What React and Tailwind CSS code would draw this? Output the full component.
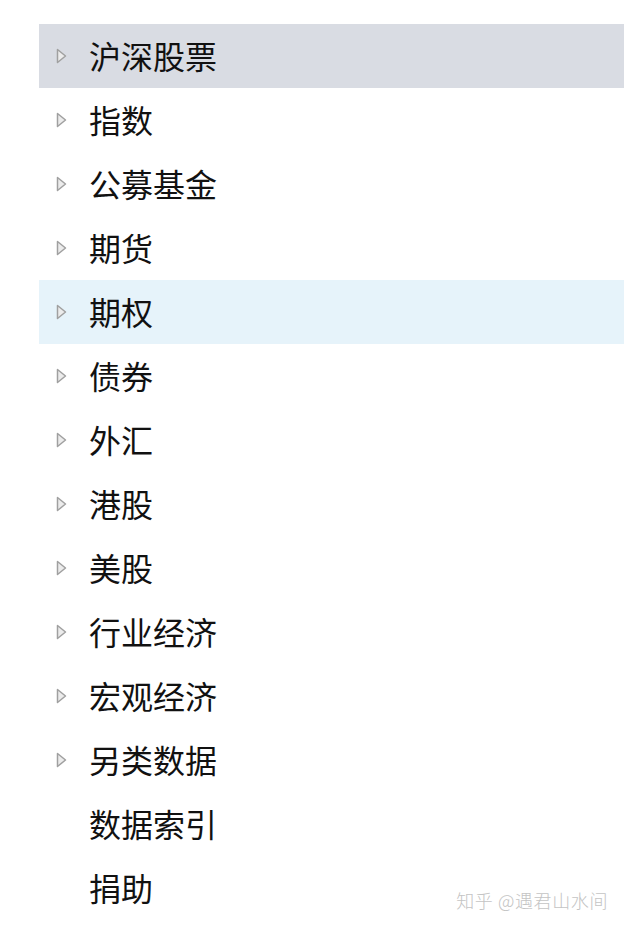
const items = [
  { label: '沪深股票', arrow: true, bg: 'bg-[#d9dce3]' },
  { label: '指数', arrow: true },
  { label: '公募基金', arrow: true },
  { label: '期货', arrow: true },
  { label: '期权', arrow: true, bg: 'bg-[#e6f3fa]' },
  { label: '债券', arrow: true },
  { label: '外汇', arrow: true },
  { label: '港股', arrow: true },
  { label: '美股', arrow: true },
  { label: '行业经济', arrow: true },
  { label: '宏观经济', arrow: true },
  { label: '另类数据', arrow: true },
  { label: '数据索引', arrow: false },
  { label: '捐助', arrow: false },
];

function Arrow() {
  return (
    <svg width="11" height="16" viewBox="0 0 11 16" className="shrink-0">
      <path d="M1.5 1.5 L9.5 8 L1.5 14.5 Z" fill="#ececec" stroke="#a0a0a0" strokeWidth="1.5" strokeLinejoin="round" />
    </svg>
  );
}

export default function App() {
  return (
    <div
      className="relative h-[930px] w-[624px] overflow-hidden bg-white pt-6 pl-[39px]"
      style={{ fontFamily: '"Microsoft YaHei", "Noto Sans CJK SC", sans-serif' }}
    >
      <ul className="flex flex-col">
        {items.map((item) => (
          <li key={item.label} className={`flex h-16 items-center pl-[17px] ${item.bg || ''}`}>
            <span className="flex w-[33px] items-center">{item.arrow && <Arrow />}</span>
            <span className="-mt-[3px] text-[32px] leading-none text-[#111]">{item.label}</span>
          </li>
        ))}
      </ul>
      <div className="absolute right-[16px] bottom-[16px] text-[18px] font-light tracking-[0.6px] text-[#c4c4c4]">
        知乎 @遇君山水间
      </div>
    </div>
  );
}
